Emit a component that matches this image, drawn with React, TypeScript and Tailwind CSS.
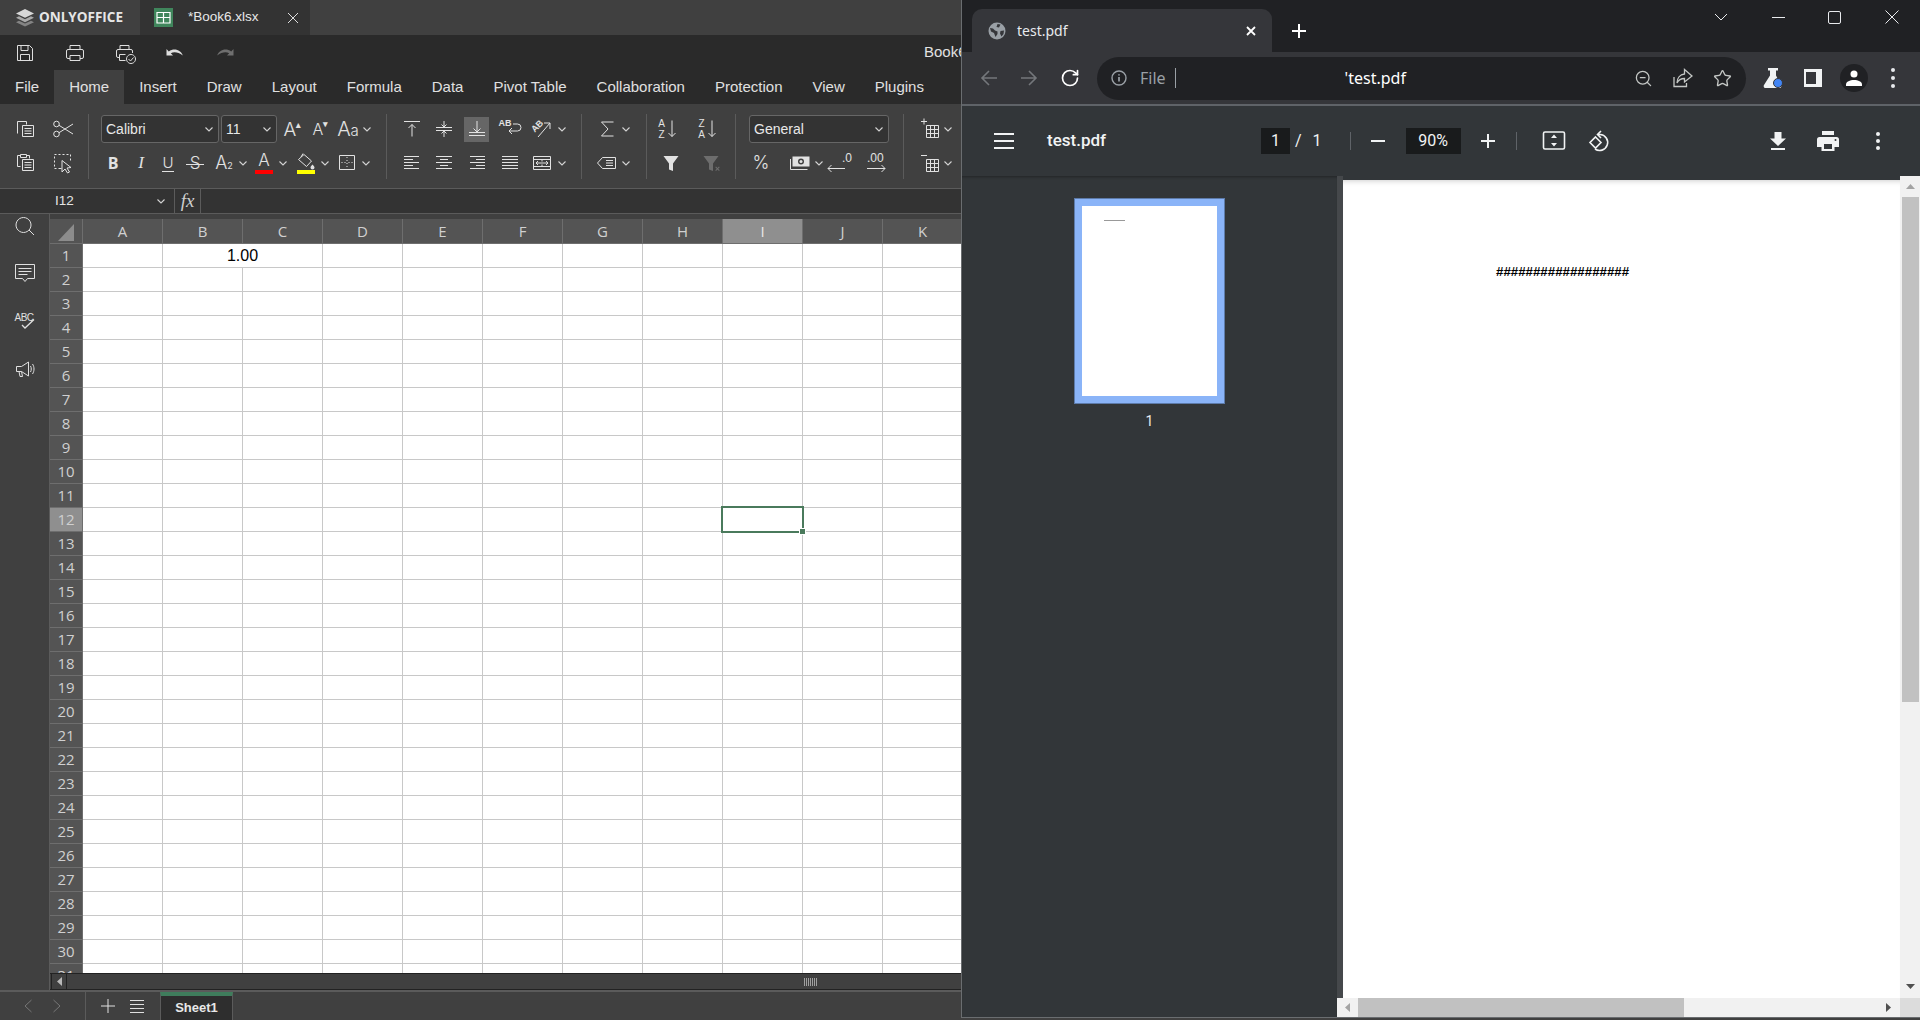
import { ReactNode } from "react"
import { RotateCw, Star, ZoomOut } from "lucide-react"

const ui = "font-['Liberation_Sans',Arial,sans-serif]"
const columns = ["A", "B", "C", "D", "E", "F", "G", "H", "I", "J", "K"]
const rows = Array.from({ length: 31 }, (_, i) => i + 1)
const menu = ["File", "Home", "Insert", "Draw", "Layout", "Formula", "Data", "Pivot Table", "Collaboration", "Protection", "View", "Plugins"]

function Ico({ d, fill, className }: { d: string; fill?: boolean; className?: string }) {
  return (
    <svg viewBox="0 0 24 24" className={`h-6 w-6 shrink-0 ${className ?? ""}`} fill={fill ? "currentColor" : "none"} stroke={fill ? "none" : "currentColor"} strokeWidth={1}>
      <path d={d} />
    </svg>
  )
}

function Chev() {
  return (
    <svg viewBox="0 0 8 5" className="h-[5px] w-2 shrink-0" fill="none" stroke="#d4d4d4" strokeWidth={1.1}>
      <path d="M.5.5 4 4 7.5.5" />
    </svg>
  )
}

function Slot({ className, children }: { className: string; children?: ReactNode }) {
  return <div className={`flex h-full shrink-0 items-center justify-center ${className}`}>{children}</div>
}

function Row({ className, children }: { className?: string; children: ReactNode }) {
  return <div className={`flex h-[34px] items-center text-[#e2e2e2] ${className ?? ""}`}>{children}</div>
}

function Divider() {
  return <div className="h-[65px] w-px shrink-0 self-center bg-[#5b5b5b]" />
}

function Select({ label, className }: { label: string; className: string }) {
  return (
    <div className={`flex h-[28px] shrink-0 items-center justify-between rounded-[3px] border border-[#666666] bg-[#333333] pl-[4px] pr-[5px] text-[14px] text-[#e8e8e8] ${className}`}>
      <span>{label}</span>
      <Chev />
    </div>
  )
}

function ThinLetter({ children, className }: { children: ReactNode; className?: string }) {
  return <span className={`font-['Inter',sans-serif] font-light leading-none ${className ?? ""}`}>{children}</span>
}

function TitleBar() {
  return (
    <div className="flex h-[35px] shrink-0 bg-[#404040]">
      <div className="flex w-[139px] items-center pl-[16px]">
        <svg viewBox="0 0 18 18" className="h-[18px] w-[18px] text-[#d8d8d8]" fill="currentColor">
          <path d="M9 0l9 4.4L9 8.8 0 4.4z" />
          <path d="M3 7.3l6 2.9 6-2.9 3 1.5-9 4.4-9-4.4z" opacity=".7" />
          <path d="M3 11.7l6 2.9 6-2.9 3 1.5L9 17.6 0 13.2z" opacity=".45" />
        </svg>
        <span className="ml-[5px] font-['Open_Sans',sans-serif] text-[13.5px] font-bold text-[#e6e6e6]">ONLYOFFICE</span>
      </div>
      <div className="ml-px flex w-[170px] items-center bg-[#333333] pl-[14px]">
        <svg viewBox="0 0 19 19" className="h-[19px] w-[19px]">
          <rect width="19" height="19" fill="#40865c" />
          <path d="M3 4.5h13v10.5H3z M3 9.5h13 M9.5 4.5V15" fill="none" stroke="#ffffff" strokeWidth="1.2" />
        </svg>
        <span className="ml-[15px] text-[13.5px] text-[#e8e8e8]">*Book6.xlsx</span>
        <svg viewBox="0 0 12 12" className="ml-[28px] h-3 w-3" fill="none" stroke="#dddddd">
          <path d="M1 1l10 10M11 1 1 11" />
        </svg>
      </div>
    </div>
  )
}

function QuickBar() {
  return (
    <div className="flex h-[35px] shrink-0 items-center bg-[#2a2a2a] text-[#dedede]">
      <Slot className="w-[50px]"><Ico d="M4.5 4.5h12l3 3v12h-15z M8 4.5v5h7v-5 M7.5 19.5v-6h9v6" /></Slot>
      <Slot className="w-[50px]"><Ico d="M7 8.5v-4h10v4 M7 17.5H5A1.5 1.5 0 0 1 3.5 16v-6A1.5 1.5 0 0 1 5 8.5h14a1.5 1.5 0 0 1 1.5 1.5v6a1.5 1.5 0 0 1-1.5 1.5h-2 M7 14.5h10v5H7z" /></Slot>
      <Slot className="w-[50px]"><Ico d="M7 8.5v-4h9v4 M6 16.5H5A1.5 1.5 0 0 1 3.5 15v-5A1.5 1.5 0 0 1 5 8.5h13a1.5 1.5 0 0 1 1.5 1.5v2 M6.5 13.5h6 M6.5 13.5v6h6 M18 13.5a4.5 4.5 0 1 0 .01 0z M15.5 18l2 2 3-3.5" /></Slot>
      <Slot className="w-[50px]"><Ico fill d="M3.5 8v6.5H10l-2.2-2.2c3.2-2 7.5-1.2 12 2.2-1.7-5.3-8.5-8.2-14-4z" /></Slot>
      <Slot className="w-[50px] text-[#6f6f6f]"><Ico fill d="M20.5 8v6.5H14l2.2-2.2c-3.2-2-7.5-1.2-12 2.2 1.7-5.3 8.5-8.2 14-4z" /></Slot>
      <div className={`ml-auto text-[15px] text-[#e2e2e2] ${ui} w-[37px] overflow-hidden whitespace-nowrap`}>Book6.xlsx</div>
    </div>
  )
}

function MenuBar() {
  return (
    <div className="flex h-[34px] shrink-0 bg-[#2a2a2a] text-[15px] text-[#e0e0e0]">
      {menu.map((m) => (
        <div key={m} className={`flex items-center px-[15px] ${m === "Home" ? "bg-[#404040]" : ""}`}>{m}</div>
      ))}
    </div>
  )
}

function Toolbar() {
  return (
    <div className="flex h-[85px] shrink-0 border-b border-[#5b5b5b] bg-[#404040]">
      <div className="w-[88px] shrink-0 pt-[8px]">
        <Row className="pl-[5px]">
          <Slot className="w-[40px]"><Ico d="M4.5 16.5v-12h9v3 M9.5 8.5h11v11h-11z M11.5 11.5h7 M11.5 14h7 M11.5 16.5h7" /></Slot>
          <Slot className="w-[36px]">
            <svg viewBox="0 0 24 24" className="h-6 w-6" fill="none" stroke="currentColor">
              <circle cx="5.5" cy="7" r="2.8" />
              <circle cx="5.5" cy="17" r="2.8" />
              <path d="M8 8.3 22 17 M8 15.7 22 7" />
            </svg>
          </Slot>
        </Row>
        <Row className="pl-[5px]">
          <Slot className="w-[40px]"><Ico d="M7.5 15.5h-3v-11h3 M13.5 4.5h3v3 M7.5 6.5v-3h6v3z M9.5 8.5h11v11h-11z M11.5 11.5h7 M11.5 14h7 M11.5 16.5h7" /></Slot>
          <Slot className="w-[36px]"><Ico d="M3.5 3.5h2 M7.5 3.5h2 M11.5 3.5h2 M15.5 3.5h2 M19.5 3.5v2 M19.5 7.5v2 M3.5 5.5v2 M3.5 9.5v2 M3.5 13.5v2 M3.5 17.5h2 M7.5 17.5h3 M11 9.5l9 7-4 .5 2.5 4-2 1-2.5-4-3 3z" /></Slot>
        </Row>
      </div>
      <Divider />
      <div className="w-[297px] shrink-0 pt-[8px]">
        <Row className="pl-[12px]">
          <Select label="Calibri" className="w-[118px]" />
          <Select label="11" className="ml-[2px] w-[56px]" />
          <Slot className="w-[26px]"><ThinLetter className="relative text-[19px]">A<span className="absolute -right-[5px] top-0 text-[9px] font-bold">▴</span></ThinLetter></Slot>
          <Slot className="w-[30px]"><ThinLetter className="relative text-[16px]">A<span className="absolute -right-[5px] -top-[2px] text-[9px] font-bold">▾</span></ThinLetter></Slot>
          <Slot className="w-[30px]"><ThinLetter className="text-[20px]">A<span className="text-[15px]">a</span></ThinLetter></Slot>
          <Slot className="w-[8px]"><Chev /></Slot>
        </Row>
        <Row className="pl-[10px]">
          <Slot className="w-[28px]"><span className="font-['Open_Sans',sans-serif] text-[16px] font-bold">B</span></Slot>
          <Slot className="w-[28px]"><span className="font-['Liberation_Serif',serif] text-[17px] italic">I</span></Slot>
          <Slot className="w-[26px]"><ThinLetter className="border-b border-current pb-px text-[15px]">U</ThinLetter></Slot>
          <Slot className="w-[28px]"><ThinLetter className="relative text-[17px]">S<span className="absolute -left-[4px] right-[-4px] top-[9px] h-px bg-current" /></ThinLetter></Slot>
          <Slot className="w-[30px]"><ThinLetter className="text-[18px]">A<span className="text-[9px] font-normal">2</span></ThinLetter></Slot>
          <Slot className="w-[8px]"><Chev /></Slot>
          <Slot className="ml-[2px] w-[30px]">
            <div className="flex flex-col items-center">
              <ThinLetter className="text-[17px]">A</ThinLetter>
              <div className="mt-[1px] h-[4px] w-[18px] bg-[#ff0000]" />
            </div>
          </Slot>
          <Slot className="w-[8px]"><Chev /></Slot>
          <Slot className="ml-[4px] w-[30px]">
            <div className="flex flex-col items-center">
              <svg viewBox="0 0 20 17" className="h-[17px] w-[20px]" fill="none" stroke="currentColor">
                <path d="M8 1.5l7.5 6.5-5 5.5L2.5 6.5z M7 .5 5 4" />
                <path d="M16.5 11.5c1.3 1.5 2 2.3 2 3a2 2 0 0 1-4 0c0-.7.7-1.5 2-3z" fill="currentColor" stroke="none" />
              </svg>
              <div className="h-[4px] w-[18px] bg-[#ffff00]" />
            </div>
          </Slot>
          <Slot className="w-[8px]"><Chev /></Slot>
          <Slot className="ml-[3px] w-[30px]"><Ico d="M4.5 4.5h15v14h-15z M12 6v1 M12 9v1 M12 12v1 M12 15v1 M6.5 11.5h1 M9.5 11.5h1 M13.5 11.5h1 M16.5 11.5h1" /></Slot>
          <Slot className="w-[8px]"><Chev /></Slot>
        </Row>
      </div>
      <Divider />
      <div className="w-[194px] shrink-0 pt-[8px]">
        <Row className="pl-[9px]">
          <Slot className="w-[32px]"><Ico d="M4 4.5h16 M12 19.5v-12 M8.5 11 12 7.5l3.5 3.5" /></Slot>
          <Slot className="w-[32px]"><Ico d="M4 10.5h16 M4 13.5h16 M12 4v6 M9.5 7.5 12 10l2.5-2.5 M12 20v-6 M9.5 16.5 12 14l2.5 2.5" /></Slot>
          <Slot className="w-[33px]">
            <div className="flex h-[25px] w-[25px] items-center justify-center bg-[#666666]"><Ico d="M4 15.5h16 M4 18.5h16 M12 4v11 M8.5 11.5 12 15l3.5-3.5" /></div>
          </Slot>
          <Slot className="w-[33px]">
            <div className="relative h-6 w-6">
              <span className="absolute left-[1px] top-[2px] text-[9px] font-bold leading-none">AB</span>
              <svg viewBox="0 0 24 24" className="absolute inset-0 h-6 w-6" fill="none" stroke="currentColor"><path d="M15 7h4.5a3 3 0 0 1 0 7H11 M14 11l-3 3 3 3" /></svg>
            </div>
          </Slot>
          <Slot className="w-[32px]">
            <div className="relative h-6 w-6">
              <span className="absolute left-[1px] top-[5px] -rotate-45 text-[9px] font-bold leading-none">AB</span>
              <svg viewBox="0 0 24 24" className="absolute inset-0 h-6 w-6" fill="none" stroke="currentColor"><path d="M8 20 20 6 M14 6h6v6" /></svg>
            </div>
          </Slot>
          <Slot className="w-[8px]"><Chev /></Slot>
        </Row>
        <Row className="pl-[9px]">
          <Slot className="w-[32px]"><Ico d="M4 5.5h15 M4 8.5h9 M4 11.5h15 M4 14.5h9 M4 17.5h15" /></Slot>
          <Slot className="w-[32px]"><Ico d="M4 5.5h16 M8 8.5h8 M4 11.5h16 M8 14.5h8 M4 17.5h16" /></Slot>
          <Slot className="w-[33px]"><Ico d="M5 5.5h15 M11 8.5h9 M5 11.5h15 M11 14.5h9 M5 17.5h15" /></Slot>
          <Slot className="w-[33px]"><Ico d="M4 5.5h16 M4 8.5h16 M4 11.5h16 M4 14.5h16 M4 17.5h16" /></Slot>
          <Slot className="w-[32px]"><Ico d="M3.5 5.5h17v13h-17z M3.5 8.5h17 M3.5 15.5h17 M6 12h12 M8 10l-2 2 2 2 M16 10l2 2-2 2 M12 8.5v2 M12 13.5v2" /></Slot>
          <Slot className="w-[8px]"><Chev /></Slot>
        </Row>
      </div>
      <Divider />
      <div className="w-[64px] shrink-0 pt-[8px]">
        <Row className="pl-[10px]">
          <Slot className="w-[30px]"><Ico d="M18.5 5h-12l6.5 7-6.500 7h12" /></Slot>
          <Slot className="w-[8px]"><Chev /></Slot>
        </Row>
        <Row className="pl-[10px]">
          <Slot className="w-[30px]"><Ico d="M7.5 6.5h13v11h-13L2.5 12z M7.5 12h.01 M11 9.5h7 M11 12h7 M11 14.5h7" /></Slot>
          <Slot className="w-[8px]"><Chev /></Slot>
        </Row>
      </div>
      <Divider />
      <div className="w-[88px] shrink-0 pt-[8px]">
        <Row>
          <Slot className="w-[48px]">
            <div className="flex items-center">
              <div className="flex flex-col text-center text-[10px] font-medium leading-[11px]"><span>A</span><span>Z</span></div>
              <Ico className="-ml-[5px]" d="M12 3.5v16 M8.5 16l3.5 3.5 3.5-3.5" />
            </div>
          </Slot>
          <Slot className="w-[32px]">
            <div className="flex items-center">
              <div className="flex flex-col text-center text-[10px] font-medium leading-[11px]"><span>Z</span><span>A</span></div>
              <Ico className="-ml-[5px]" d="M12 3.5v16 M8.5 16l3.5 3.5 3.5-3.5" />
            </div>
          </Slot>
        </Row>
        <Row>
          <Slot className="w-[48px]"><Ico fill d="M4.5 5h15L14 12.5V20l-4-1.5v-6z" /></Slot>
          <Slot className="w-[32px] text-[#6d6d6d]"><Ico fill d="M4.5 5h15L14 12.5V20l-4-1.5v-6z M17 15.5l1.5 1.5 1.5-1.5.7.7-1.5 1.5 1.5 1.5-.7.7-1.5-1.5-1.5 1.5-.7-.7 1.5-1.5-1.5-1.5z" /></Slot>
        </Row>
      </div>
      <Divider />
      <div className="w-[167px] shrink-0 pt-[8px]">
        <Row className="pl-[13px]">
          <Select label="General" className="w-[140px]" />
        </Row>
        <Row className="pl-[10px]">
          <Slot className="w-[30px]"><ThinLetter className="text-[18px]">%</ThinLetter></Slot>
          <Slot className="ml-[9px] w-[30px]">
            <svg viewBox="0 0 20 14" className="h-[14px] w-[20px]" fill="none" stroke="currentColor">
              <path d="M2.5.5h17v10h-17z" fill="currentColor" stroke="none" />
              <path d="M.5 3v10.5h17" />
              <circle cx="11" cy="5.5" r="3" fill="#404040" stroke="none" />
              <circle cx="11" cy="5.5" r="1.5" fill="currentColor" stroke="none" />
            </svg>
          </Slot>
          <Slot className="w-[8px]"><Chev /></Slot>
          <Slot className="ml-px w-[30px]">
            <div className="relative h-6 w-[26px] text-[12px] leading-none">
              <span className="absolute right-0 top-[1px]">.0</span>
              <svg viewBox="0 0 26 24" className="absolute inset-0 h-6 w-[26px]" fill="none" stroke="currentColor"><path d="M2 17.5h17 M5.5 14 2 17.5 5.5 21" /></svg>
            </div>
          </Slot>
          <Slot className="ml-[8px] w-[30px]">
            <div className="relative h-6 w-[26px] text-[12px] leading-none">
              <span className="absolute left-[3px] top-[1px]">.00</span>
              <svg viewBox="0 0 26 24" className="absolute inset-0 h-6 w-[26px]" fill="none" stroke="currentColor"><path d="M3 17.5h18 M17.5 14l3.5 3.5-3.5 3.500" /></svg>
            </div>
          </Slot>
        </Row>
      </div>
      <Divider />
      <div className="w-[57px] shrink-0 pt-[8px]">
        <Row className="pl-[12px]">
          <Slot className="w-[28px]"><Ico d="M8.5 8.5h12v12h-12z M8.5 12.5h12 M8.5 16.5h12 M12.5 8.5v12 M16.5 8.5v12 M3 4.5h6 M6 1.5v6" /></Slot>
          <Slot className="w-[8px]"><Chev /></Slot>
        </Row>
        <Row className="pl-[12px]">
          <Slot className="w-[28px]"><Ico d="M8.5 8.5h12v12h-12z M8.5 12.5h12 M8.5 16.5h12 M12.5 8.5v12 M16.5 8.5v12 M3 4.5h6" /></Slot>
          <Slot className="w-[8px]"><Chev /></Slot>
        </Row>
      </div>
    </div>
  )
}

function FormulaBar() {
  return (
    <div className="flex h-[25px] shrink-0 border-b border-[#5b5b5b] bg-[#333333] pl-[49px]">
      <div className="flex w-[126px] items-center justify-between border-r border-[#5b5b5b] pl-[6px] pr-[9px] text-[13.5px] text-[#e4e4e4]">
        <span>I12</span>
        <Chev />
      </div>
      <div className="flex w-[26px] items-center justify-center border-r border-[#5b5b5b] font-['Liberation_Serif',serif] text-[19px] italic text-[#cfcfcf]">fx</div>
    </div>
  )
}

function SideRail() {
  return (
    <div className="flex w-[49px] shrink-0 flex-col items-center bg-[#404040] text-[#e0e0e0]">
      <Ico d="M10.5 3.5a7.5 7.5 0 1 0 .01 0z M16 16l5 5" />
      <Ico className="mt-[23px]" d="M2.5 3.5h19v14h-7l-2.5 3-2.5-3h-7z M5.5 7.5h13 M5.5 10.5h13 M5.5 13.5h9" />
      <div className="relative mt-[22px] h-6 w-6">
        <span className="absolute left-[2px] top-[6px] text-[10px] leading-none tracking-[-.5px]">ABC</span>
        <svg viewBox="0 0 24 24" className="absolute inset-0 h-6 w-6" fill="none" stroke="currentColor" strokeWidth={1.3}><path d="M9 18l3 3 9-8.500" /></svg>
      </div>
      <Ico className="mt-[26px]" d="M3.5 9.5h5l7-4.500v14l-7-4.500h-5z M6 14.5l1 5h2.5l-1-5 M17.5 9c1 1.5 1 4.5 0 6 M19.5 7c2 3 2 7 0 10" />
    </div>
  )
}

function Sheet() {
  return (
    <div className="flex min-w-0 flex-1 flex-col border-l border-[#5b5b5b]">
      <div className="h-[5px] shrink-0 bg-[#404040]" />
      <div className="flex h-[25px] shrink-0 font-['Open_Sans',sans-serif] text-[15px] text-[#d0d0d0]">
        <div className="flex w-[33px] shrink-0 items-end justify-center border-b border-r border-[#6e6e6e] bg-[#545454] pb-[2px]">
          <svg viewBox="0 0 16 17" className="h-[17px] w-4" fill="#8c8c8c"><path d="M16 0v17H0z" /></svg>
        </div>
        {columns.map((c) => (
          <div key={c} className={`flex w-20 shrink-0 items-center justify-center border-b border-r border-[#6e6e6e] ${c === "I" ? "bg-[#8f8f8f] text-[#e8e8e8]" : "bg-[#545454]"}`}>{c}</div>
        ))}
      </div>
      <div className="h-[729px] shrink-0 overflow-hidden">
        {rows.map((r) => (
          <div key={r} className="flex h-6">
            <div className={`flex w-[33px] shrink-0 items-center justify-center border-b border-r border-[#6e6e6e] font-['Open_Sans',sans-serif] text-[15px] text-[#d0d0d0] ${r === 12 ? "bg-[#8f8f8f]" : "bg-[#545454]"}`}>{r}</div>
            {r === 1 && (
              <>
                <div className="w-20 shrink-0 border-b border-r border-[#c8c8c8] bg-white" />
                <div className="flex w-40 shrink-0 items-center justify-center border-b border-r border-[#c8c8c8] bg-white text-[16px] text-black">1.00</div>
                {columns.slice(3).map((c) => (
                  <div key={c} className="w-20 shrink-0 border-b border-r border-[#c8c8c8] bg-white" />
                ))}
              </>
            )}
            {r !== 1 &&
              columns.map((c) =>
                r === 12 && c === "I" ? (
                  <div key={c} className="relative z-10 w-20 shrink-0 border-b border-r border-[#c8c8c8] bg-white">
                    <div className="absolute -left-[2px] -top-[2px] h-[27px] w-[83px] border-2 border-[#4a7a5c]">
                      <div className="absolute left-[76px] top-[20px] h-[7px] w-[7px] border border-white bg-[#4a7a5c]" />
                    </div>
                  </div>
                ) : (
                  <div key={c} className="w-20 shrink-0 border-b border-r border-[#c8c8c8] bg-white" />
                ),
              )}
          </div>
        ))}
      </div>
      <div className="flex h-[17px] shrink-0 border-y border-[#222222] bg-[#404040]">
        <div className="ml-px flex w-[16px] shrink-0 items-center justify-center border-x border-[#222222]">
          <svg viewBox="0 0 5 9" className="h-[9px] w-[5px]" fill="#b8b8b8"><path d="M5 0v9L0 4.5z" /></svg>
        </div>
        <div className="flex flex-1 items-center pl-[737px]">
          <div className="h-[8px] w-[14px] bg-[repeating-linear-gradient(90deg,#a0a0a0_0,#a0a0a0_1px,transparent_1px,transparent_2px)]" />
        </div>
      </div>
    </div>
  )
}

function SheetTabs() {
  return (
    <div className="flex h-[30px] shrink-0 border-t-2 border-[#5b5b5b] bg-[#404040]">
      <div className="flex w-[86px] shrink-0 items-center border-r border-[#5b5b5b] pl-[23px] text-[#777777]">
        <svg viewBox="0 0 10 14" className="h-[14px] w-[10px]" fill="none" stroke="currentColor"><path d="M8.5 1 2 7l6.5 6" /></svg>
        <svg viewBox="0 0 10 14" className="ml-[19px] h-[14px] w-[10px]" fill="none" stroke="currentColor"><path d="M1.5 1 8 7l-6.5 6" /></svg>
      </div>
      <div className="flex w-[74px] shrink-0 items-center pl-[15px] text-[#e0e0e0]">
        <svg viewBox="0 0 14 14" className="h-[14px] w-[14px]" fill="none" stroke="currentColor"><path d="M7 0v14M0 7h14" /></svg>
        <svg viewBox="0 0 14 14" className="ml-[15px] h-[14px] w-[14px]" fill="none" stroke="currentColor"><path d="M0 1.5h14M0 5.5h14M0 9.5h14M0 13.5h14" /></svg>
      </div>
      <div className="flex w-[73px] shrink-0 items-center justify-center border-x border-t-[4px] border-x-[#5b5b5b] border-t-[#3f7d5c] bg-[#2e2e2e] text-[13px] font-bold text-[#e8e8e8]">Sheet1</div>
    </div>
  )
}

function SpreadsheetWindow() {
  return (
    <div className={`flex w-[961px] shrink-0 flex-col overflow-hidden ${ui}`}>
      <TitleBar />
      <QuickBar />
      <MenuBar />
      <Toolbar />
      <FormulaBar />
      <div className="flex h-[776px] shrink-0">
        <SideRail />
        <Sheet />
      </div>
      <SheetTabs />
    </div>
  )
}

function BrowserChrome() {
  return (
    <div className="font-['Noto_Sans',sans-serif]">
      <div className="flex h-[52px] items-end bg-[#202124] pl-[10px]">
        <div className="flex h-[43px] w-[300px] items-center rounded-t-[10px] bg-[#35363a] pl-[16px] text-[#e8eaed]">
          <svg viewBox="0 0 18 18" className="h-[18px] w-[18px]">
            <circle cx="9" cy="9" r="8.5" fill="#9aa0a6" />
            <path d="M2 6l3 .5 2 2 2.5 1v2.500L7.5 15 6 11l-3-1.500z M9.5 2l3 .5-1.500 3-2.500-.5z M12.5 9l3.5-.5-.5 3.500-2 2.500-1.500-3z" fill="#35363a" />
          </svg>
          <span className="ml-[11px] text-[14px]">test.pdf</span>
          <svg viewBox="0 0 12 12" className="ml-[177px] h-3 w-3" fill="none" stroke="#ffffff" strokeWidth={1.8}><path d="M2 2l8 8M10 2l-8 8" /></svg>
        </div>
        <div className="flex h-[43px] w-[54px] items-center justify-center">
          <svg viewBox="0 0 16 16" className="h-4 w-4" fill="none" stroke="#ffffff" strokeWidth={2}><path d="M8 1v14M1 8h14" /></svg>
        </div>
        <div className="ml-auto flex h-[52px] items-start text-[#e8eaed]">
          <div className="flex h-[34px] w-[58px] items-center justify-center">
            <svg viewBox="0 0 14 8" className="h-2 w-[14px]" fill="none" stroke="currentColor"><path d="M1 1l6 6 6-6" /></svg>
          </div>
          <div className="flex h-[34px] w-[56px] items-center justify-center">
            <div className="h-px w-[13px] bg-current" />
          </div>
          <div className="mr-[2px] flex h-[34px] w-[56px] items-center justify-center">
            <div className="h-[13px] w-[13px] rounded-[2px] border border-current" />
          </div>
          <div className="flex h-[34px] w-[56px] items-center justify-center pr-[1px]">
            <svg viewBox="0 0 14 14" className="h-[14px] w-[14px]" fill="none" stroke="currentColor"><path d="M.5.5l13 13M13.5.5l-13 13" /></svg>
          </div>
        </div>
      </div>
      <div className="flex h-[52px] items-center bg-[#35363a]">
        <Slot className="ml-[7px] w-[40px] text-[#74777b]"><svg viewBox="0 0 18 18" className="h-[18px] w-[18px]" fill="none" stroke="currentColor" strokeWidth={1.6}><path d="M17 9H2 M9 2 2 9l7 7" /></svg></Slot>
        <Slot className="w-[40px] text-[#74777b]"><svg viewBox="0 0 18 18" className="h-[18px] w-[18px]" fill="none" stroke="currentColor" strokeWidth={1.6}><path d="M1 9h15 M9 2l7 7-7 7" /></svg></Slot>
        <Slot className="w-[41px] text-[#ffffff]"><RotateCw size={20} strokeWidth={2} /></Slot>
        <div className="relative ml-[7px] flex h-[43px] w-[649px] items-center rounded-full bg-[#202124] pl-[14px]">
          <svg viewBox="0 0 16 16" className="h-4 w-4" fill="none" stroke="#9aa0a6" strokeWidth={1.4}>
            <circle cx="8" cy="8" r="7" />
            <path d="M8 7v4.5M8 4.2v1.3" strokeWidth={1.7} />
          </svg>
          <span className="ml-[13px] text-[16px] text-[#9aa0a6]">File</span>
          <div className="ml-[9px] h-[20px] w-px bg-[#9aa0a6]" />
          <span className="ml-[169px] text-[16px] text-white">'test.pdf</span>
          <div className="ml-auto flex items-center text-[#c4c7c5]">
            <Slot className="w-[40px]"><ZoomOut size={19} strokeWidth={1.6} /></Slot>
            <Slot className="w-[40px]">
              <svg viewBox="0 0 20 20" className="h-5 w-5" fill="none" stroke="currentColor" strokeWidth={1.3}><path d="M1 9v9.5h12.5V15 M11.5 1.5 19 8l-7.5 6v-3.5C8 10.5 5.5 12 4 15c0-5 3-8.5 7.5-9z" /></svg>
            </Slot>
            <Slot className="w-[40px] pr-px"><Star size={19} strokeWidth={1.7} /></Slot>
            <div className="w-[3px]" />
          </div>
        </div>
        <Slot className="ml-[7px] w-[40px]">
          <svg viewBox="0 0 20 20" className="h-5 w-5">
            <path d="M5 0h10v2.500h-2v5L18 17c.8 1.500 0 3-1.500 3h-14C1 20 .2 18.500 1 17L7 7.500v-5H5z" fill="#f1f3f4" />
            <circle cx="15" cy="15" r="4.5" fill="#4285f4" stroke="#35363a" />
          </svg>
        </Slot>
        <Slot className="w-[40px]">
          <div className="flex h-[18px] w-[18px] items-center justify-start bg-[#f1f3f4] pl-[2px]"><div className="h-[12px] w-[10px] bg-[#35363a]" /></div>
        </Slot>
        <Slot className="ml-px w-[40px]">
          <div className="flex h-[28px] w-[28px] items-center justify-center rounded-full bg-[#202124]">
            <svg viewBox="0 0 16 16" className="h-4 w-4" fill="#ffffff">
              <circle cx="8" cy="4" r="3.5" />
              <path d="M0 14.5c0-3 4-4.5 8-4.5s8 1.5 8 4.5V16H0z" />
            </svg>
          </div>
        </Slot>
        <Slot className="-ml-px w-[40px] flex-col gap-[4px]">
          <div className="h-[4px] w-[4px] rounded-full bg-[#e8eaed]" />
          <div className="h-[4px] w-[4px] rounded-full bg-[#e8eaed]" />
          <div className="h-[4px] w-[4px] rounded-full bg-[#e8eaed]" />
        </Slot>
      </div>
    </div>
  )
}

function PdfToolbar() {
  return (
    <div className="flex h-[72px] items-center border-t-2 border-[#5f6368] bg-[#323639] font-['Roboto',sans-serif] text-[#f1f3f4]">
      <Slot className="ml-[22px] w-[40px]">
        <svg viewBox="0 0 20 16" className="h-4 w-5" fill="currentColor"><path d="M0 0h20v2H0z M0 7h20v2H0z M0 14h20v2H0z" /></svg>
      </Slot>
      <div className="ml-[23px] w-[214px] shrink-0 text-[17px] font-medium">test.pdf</div>
      <div className="flex h-[26px] w-[29px] shrink-0 items-center justify-center bg-[#191b1c] text-[16px]">1</div>
      <span className="ml-[5px] text-[16px]">/</span>
      <span className="ml-[11px] text-[16px]">1</span>
      <div className="ml-[28px] h-[18px] w-px bg-[#5f6368]" />
      <Slot className="ml-[7px] w-[40px]"><div className="h-[2px] w-[14px] bg-current" /></Slot>
      <div className="ml-[8px] flex h-[26px] w-[55px] shrink-0 items-center justify-center bg-[#191b1c] text-[16px]">90%</div>
      <Slot className="ml-[7px] w-[40px]"><svg viewBox="0 0 14 14" className="h-[14px] w-[14px]" fill="currentColor"><path d="M6 0h2v6h6v2H8v6H6V8H0V6h6z" /></svg></Slot>
      <div className="ml-[8px] h-[18px] w-px bg-[#5f6368]" />
      <Slot className="ml-[17px] w-[40px]">
        <svg viewBox="0 0 24 20" className="h-5 w-6" fill="none" stroke="currentColor" strokeWidth={1.6}>
          <rect x="1.5" y="1" width="21" height="17" rx="1.5" />
          <path d="M12 3.5l3 3.5H9z M12 15.5 9 12h6z" fill="currentColor" stroke="none" />
        </svg>
      </Slot>
      <Slot className="ml-[5px] w-[40px]">
        <svg viewBox="0 0 24 24" className="h-6 w-6" fill="none" stroke="currentColor" strokeWidth={1.6}>
          <path d="M11 5.5h2a8 8 0 1 1-5 14.5 M14 2l-3.5 3.5L14 9" />
          <path d="M8.5 8 14 13.5 8.5 19 3 13.5z" />
        </svg>
      </Slot>
      <Slot className="ml-[139px] w-[40px]">
        <svg viewBox="0 0 16 18" className="h-[18px] w-4" fill="currentColor"><path d="M4.5 0h7v6.5H16L8 14 0 6.5h4.5z M1 16h14v2H1z" /></svg>
      </Slot>
      <Slot className="ml-[10px] w-[40px]">
        <svg viewBox="0 0 22 20" className="h-5 w-[22px]" fill="currentColor">
          <path d="M5 0h12v4H5z M2.5 6h17A2.5 2.5 0 0 1 22 8.5V16h-4.5v4h-13v-4H0V8.5A2.5 2.5 0 0 1 2.5 6z M7 13v5h8v-5z" fillRule="evenodd" />
          <circle cx="18.5" cy="9" r="1" fill="#323639" />
        </svg>
      </Slot>
      <Slot className="ml-[10px] w-[40px] flex-col gap-[3px]">
        <div className="h-[4px] w-[4px] rounded-full bg-current" />
        <div className="h-[4px] w-[4px] rounded-full bg-current" />
        <div className="h-[4px] w-[4px] rounded-full bg-current" />
      </Slot>
    </div>
  )
}

function PdfBody() {
  return (
    <div className="flex h-[841px] bg-[#323639] font-['Roboto',sans-serif]">
      <div className="flex w-[375px] shrink-0 flex-col items-center shadow-[inset_0_3px_3px_-2px_#222426]">
        <div className="ml-[-1px] mt-[22px] h-[206px] w-[151px] border border-[#5d7baa] bg-[#8ab4f8] p-[7px]">
          <div className="h-full w-full bg-white pl-[22px] pt-[14px]">
            <div className="h-px w-[21px] bg-[#999999]" />
          </div>
        </div>
        <div className="mt-[7px] text-[14px] text-[#e8eaed]">1</div>
      </div>
      <div className="flex min-w-0 flex-1 flex-col">
        <div className="flex min-h-0 flex-1">
          <div className="w-[6px] shrink-0 bg-[#45484b]" />
          <div className="min-w-0 flex-1 pt-[4px]">
            <div className="h-full bg-white pl-[153px] pt-[84px] font-['Liberation_Sans',sans-serif] text-[13.3px] font-bold leading-[16px] text-black shadow-[inset_0_6px_6px_-6px_#00000040]">
              ##################
            </div>
          </div>
          <div className="flex w-5 shrink-0 flex-col items-center bg-[#f1f1f1] pt-[8px]">
            <svg viewBox="0 0 9 5" className="h-[5px] w-[9px]" fill="#a3a3a3"><path d="M4.5 0 9 5H0z" /></svg>
            <div className="mt-[8px] h-[505px] w-[17px] bg-[#c1c1c1]" />
            <div className="flex-1" />
            <svg viewBox="0 0 9 5" className="mb-[9px] h-[5px] w-[9px]" fill="#505050"><path d="M0 0h9L4.5 5z" /></svg>
          </div>
        </div>
        <div className="flex h-[19px] shrink-0 bg-[#f1f1f1]">
          <div className="flex w-[21px] shrink-0 items-center justify-center">
            <svg viewBox="0 0 5 9" className="h-[9px] w-[5px]" fill="#a3a3a3"><path d="M5 0v9L0 4.5z" /></svg>
          </div>
          <div className="h-full w-[326px] bg-[#c1c1c1]" />
          <div className="flex flex-1 items-center justify-end pr-[9px]">
            <svg viewBox="0 0 5 9" className="h-[9px] w-[5px]" fill="#505050"><path d="M0 0v9l5-4.5z" /></svg>
          </div>
          <div className="w-5 shrink-0 bg-[#dcdcdc]" />
        </div>
      </div>
    </div>
  )
}

export default function App() {
  return (
    <div className="flex h-[1020px] w-[1920px] overflow-hidden bg-[#404040]">
      <SpreadsheetWindow />
      <div className="h-[1018px] w-[959px] shrink-0 overflow-hidden border-b border-l border-[#6a6d70] bg-[#323639]">
        <BrowserChrome />
        <PdfToolbar />
        <PdfBody />
      </div>
    </div>
  )
}
